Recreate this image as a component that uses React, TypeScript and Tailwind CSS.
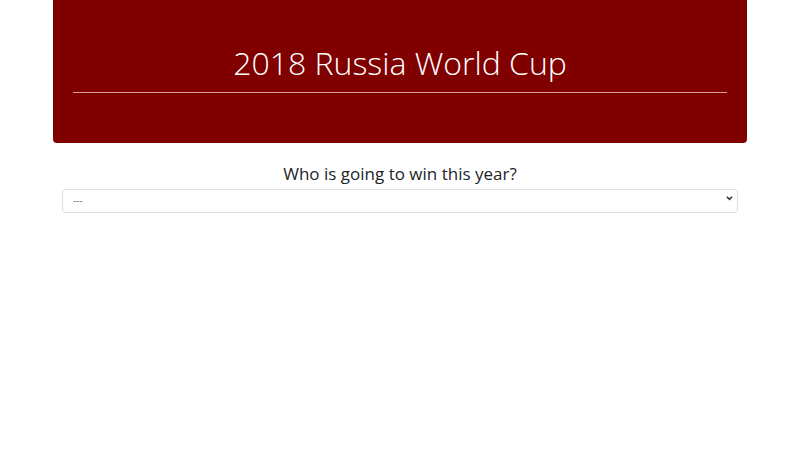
import React from 'react';

const teams = ['---', 'Brazil', 'Germany', 'France', 'Spain', 'Argentina', 'Belgium', 'England', 'Russia'];

export default function App() {
  return (
    <div className="min-h-[450px] bg-white font-['Open_Sans',sans-serif] text-[#212529]">
      <div className="mx-[53px] rounded-b-[4px] bg-[#800000] px-[20px] pt-[38px] pb-[50px]">
        <h1 className="text-center text-[32px] font-light leading-[50px] text-white">2018 Russia World Cup</h1>
        <hr className="mt-[4px] border-t border-[#d9a0a0]" />
      </div>
      <div className="mx-[62px] mt-[18px]">
        <h4 className="text-center text-[17px] leading-[25px]">Who is going to win this year?</h4>
        <div className="relative">
          <select className="h-[24px] w-full appearance-none rounded-[3px] border border-[#dcdfe3] bg-white pl-[10px] text-[10px] text-[#6c757d] outline-none">
            {teams.map((t) => (
              <option key={t}>{t}</option>
            ))}
          </select>
          <svg
            className="pointer-events-none absolute right-[5px] top-[9px]"
            width="7"
            height="6"
            viewBox="0 0 8 6"
            fill="none"
            stroke="#343a40"
            strokeWidth="1.8"
          >
            <path d="M1 1.5l3 3 3-3" />
          </svg>
        </div>
      </div>
    </div>
  );
}
